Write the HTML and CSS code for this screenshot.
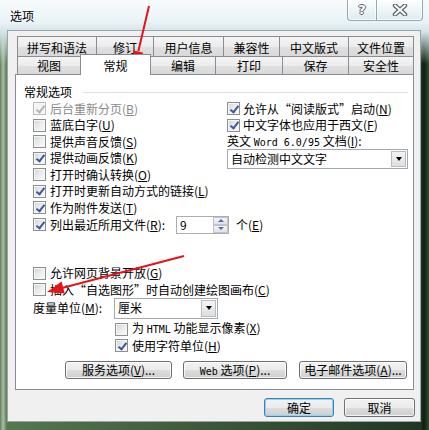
FILE: index.html
```html
<!DOCTYPE html>
<html lang="zh-CN">
<head>
  <meta charset="UTF-8" />
  <title>选项</title>
  <link rel="stylesheet" href="styles.css">
</head>
<body>
  <div class="window">
    <div class="titlebar">
      <span class="title">选项</span>
      <div class="caption">
        <div class="cap-btn cap-help">?</div>
        <div class="cap-btn cap-close">
          <svg width="16" height="12" viewBox="0 0 16 12">
            <path d="M3 1.5 L13 10.5 M13 1.5 L3 10.5" stroke="#59626b" stroke-width="4.4" stroke-linecap="round" fill="none"/>
            <path d="M3 1.5 L13 10.5 M13 1.5 L3 10.5" stroke="#fff" stroke-width="2" stroke-linecap="round" fill="none"/>
          </svg>
        </div>
      </div>
    </div>

    <div class="client">
      <!-- two rows of tabs, front row holds the selected one -->
      <div class="tabs">
        <div class="tab-row back">
          <div class="tab tab-spell">拼写和语法</div>
          <div class="tab tab-track">修订</div>
          <div class="tab tab-user">用户信息</div>
          <div class="tab tab-compat">兼容性</div>
          <div class="tab tab-layout">中文版式</div>
          <div class="tab tab-files">文件位置</div>
        </div>
        <div class="tab-row front">
          <div class="tab tab-view">视图</div>
          <div class="tab tab-general active">常规</div>
          <div class="tab tab-edit">编辑</div>
          <div class="tab tab-print">打印</div>
          <div class="tab tab-save">保存</div>
          <div class="tab tab-security">安全性</div>
        </div>
      </div>

      <div class="panel">
        <div class="group-head">
          <span>常规选项</span>
          <div class="rule"></div>
        </div>

        <div class="cols">
          <div class="col">
            <div class="check disabled"><span class="box on"></span><span>后台重新分页(<u>B</u>)</span></div>
            <div class="check"><span class="box"></span><span>蓝底白字(<u>U</u>)</span></div>
            <div class="check"><span class="box"></span><span>提供声音反馈(<u>S</u>)</span></div>
            <div class="check"><span class="box on"></span><span>提供动画反馈(<u>K</u>)</span></div>
            <div class="check"><span class="box"></span><span>打开时确认转换(<u>O</u>)</span></div>
            <div class="check"><span class="box on"></span><span>打开时更新自动方式的链接(<u>L</u>)</span></div>
            <div class="check"><span class="box on"></span><span>作为附件发送(<u>T</u>)</span></div>
            <div class="check spin-row">
              <span class="box on"></span>
              <span class="spin-label">列出最近所用文件(<u>R</u>):</span>
              <div class="spin">
                <span class="spin-val">9</span>
                <div class="spin-btns">
                  <span class="up"></span>
                  <span class="down"></span>
                </div>
              </div>
              <span class="unit">个(<u>E</u>)</span>
            </div>
          </div>

          <div class="col right">
            <div class="check"><span class="box on"></span><span>允许从“阅读版式”启动(<u>N</u>)</span></div>
            <div class="check"><span class="box on"></span><span>中文字体也应用于西文(<u>F</u>)</span></div>
            <div class="label-row">英文 <span class="mono">Word 6.0/95</span> 文档(<u>I</u>):</div>
            <div class="combo combo-wide">
              <span class="combo-text">自动检测中文文字</span>
              <span class="combo-btn"></span>
            </div>
          </div>
        </div>

        <div class="lower">
          <div class="check"><span class="box"></span><span>允许网页背景开放(<u>G</u>)</span></div>
          <div class="check"><span class="box"></span><span>插入“自选图形”时自动创建绘图画布(<u>C</u>)</span></div>
          <div class="measure">
            <span class="measure-label">度量单位(<u>M</u>):</span>
            <div class="combo combo-unit">
              <span class="combo-text">厘米</span>
              <span class="combo-btn"></span>
            </div>
          </div>
          <div class="check sub first"><span class="box"></span><span>为 <span class="mono">HTML</span> 功能显示像素(<u>X</u>)</span></div>
          <div class="check sub"><span class="box on"></span><span>使用字符单位(<u>H</u>)</span></div>
        </div>

        <div class="btn-row">
          <button class="btn btn-service">服务选项(<u>V</u>)...</button>
          <button class="btn btn-web"><span class="mono">Web</span> 选项(<u>P</u>)...</button>
          <button class="btn btn-mail">电子邮件选项(<u>A</u>)...</button>
        </div>
      </div>

      <div class="footer">
        <button class="btn btn-ok">确定</button>
        <button class="btn btn-cancel">取消</button>
      </div>
    </div>

    <!-- red annotation arrows drawn over the dialog -->
    <svg class="marks" width="429" height="430" viewBox="0 0 429 430">
      <line x1="149" y1="6" x2="138.4" y2="51" stroke="#e3151b" stroke-width="2"/>
      <polygon points="135,64 132.8,50.3 143.4,52.8" fill="#e3151b"/>
      <line x1="184" y1="256" x2="62" y2="288" stroke="#e3151b" stroke-width="2"/>
      <polygon points="47,292 61.6,281.4 64.8,293.6" fill="#e3151b"/>
    </svg>
  </div>
</body>
</html>
```

FILE: styles.css
```css
* {
  box-sizing: border-box;
}

body {
  margin: 0;
  background: #253d25;
  font-family: "Noto Sans CJK SC", "Noto Sans", sans-serif;
  font-size: 12px;
  line-height: 16px;
  color: #000;
}

u {
  text-decoration: underline;
  text-underline-offset: 1px;
}

.mono {
  font-family: "DejaVu Sans Mono", "Liberation Mono", monospace;
  font-size: 10px;
}

/* Aero glass frame */
.window {
  position: relative;
  width: 429px;
  height: 430px;
  display: flex;
  flex-direction: column;
  padding: 0 8px 8px 7px;
  overflow: hidden;
  background:
    linear-gradient(to bottom, #f7fbfc 0, #e9f3f6 22px, #d3e3e7 32px, rgba(190, 210, 200, 0) 64px),
    linear-gradient(to right, #5f7f5c 0, #a9c0a6 3px, #56774f 7px, #203622 421px, #0e1c0f 424px, #2f5230 429px);
}

.titlebar {
  height: 30px;
  display: flex;
  justify-content: space-between;
  align-items: flex-start;
}

.title {
  margin: 8px 0 0 3px;
  font-size: 12px;
  text-shadow: 0 0 6px #fff, 0 0 3px #fff;
}

.caption {
  display: flex;
  margin-right: -2px;
}

.cap-btn {
  height: 21px;
  display: flex;
  justify-content: center;
  align-items: center;
  border: 1px solid rgba(80, 100, 115, 0.55);
  border-top: none;
  background: linear-gradient(to bottom, rgba(255, 255, 255, 0.75), rgba(215, 232, 238, 0.7));
  box-shadow: inset 0 0 0 1px rgba(255, 255, 255, 0.7);
}

.cap-help {
  width: 29px;
  border-right: none;
  border-radius: 0 0 0 4px;
  font-family: "DejaVu Sans", sans-serif;
  font-weight: bold;
  font-size: 13px;
  color: #fff;
  text-shadow: 1px 0 0 #5b636b, -1px 0 0 #5b636b, 0 1px 0 #5b636b, 0 -1px 0 #5b636b;
}

.cap-close {
  width: 47px;
  border-radius: 0 0 4px 0;
}

.client {
  flex: 1;
  display: flex;
  flex-direction: column;
  padding: 5px 6px 0 7px;
  background: #f0f0f0;
  border: 1px solid #9aa5ae;
}

/* Tabs */
.tabs {
  height: 38px;
  margin-left: 2px;
}

.tab-row {
  display: flex;
  align-items: flex-start;
}

.tab-row.back {
  height: 20px;
}

.tab-row.front {
  height: 18px;
}

.tab {
  flex: none;
  margin-left: -1px;
  border: 1px solid #898c95;
  border-bottom: none;
  background: linear-gradient(to bottom, #f4f4f4 0, #ececec 50%, #e0e0e0 51%, #d9d9d9 100%);
  text-align: center;
  white-space: nowrap;
}

.tab-row .tab:first-child {
  margin-left: 0;
}

.back .tab {
  height: 20px;
  padding-top: 3px;
}

.front .tab {
  height: 18px;
  padding-top: 1px;
}

.front .tab.active {
  height: 21px;
  margin-top: -2px;
  padding-top: 3px;
  background: #fff;
  z-index: 2;
}

.tab-spell { width: 80px; }
.tab-track { width: 58px; }
.tab-user { width: 71px; }
.tab-compat { width: 57px; }
.tab-layout { width: 70px; }
.tab-files { width: 66px; }

.tab-view { width: 64px; }
.tab-general { width: 71px; }
.tab-edit { width: 66px; }
.tab-print { width: 68px; }
.tab-save { width: 67px; }
.tab-security { width: 66px; }

/* Page panel */
.panel {
  height: 316px;
  display: flex;
  flex-direction: column;
  padding-top: 9px;
  background: #fff;
  border: 1px solid #898c95;
}

.group-head {
  display: flex;
  align-items: center;
  height: 16px;
  margin-left: 8px;
}

.group-head .rule {
  flex: 1;
  height: 1px;
  margin: 0 5px 0 11px;
  background: #d5dfe5;
}

.cols {
  display: grid;
  grid-template-columns: 194px 181px;
  padding-left: 17px;
  margin-top: 0.4px;
}

.check {
  display: flex;
  align-items: center;
  height: 16.5px;
  white-space: nowrap;
}

.check > * {
  flex: none;
}

.box {
  position: relative;
  width: 13px;
  height: 13px;
  margin-right: 4px;
  border: 1px solid #8e8f8f;
  background: linear-gradient(135deg, #cdd1d6 0, #e9eaec 45%, #fbfbfb 100%);
  box-shadow: inset 0 0 0 1px #f6f6f6;
}

.box.on::after {
  content: "";
  position: absolute;
  left: 3.5px;
  top: 0.5px;
  width: 3px;
  height: 7px;
  border: solid #3b589a;
  border-width: 0 2px 2px 0;
  transform: rotate(38deg);
}

.right .box {
  margin-right: 3px;
}

.check.disabled {
  color: #8a8a8a;
}

.check.disabled .box {
  border-color: #bcbcbc;
  background: #f4f4f4;
}

.check.disabled .box.on::after {
  border-color: #b4b4b4;
}

.spin-row {
  height: 18px;
}

.spin-label {
  width: 126px;
}

.spin {
  display: flex;
  width: 53px;
  height: 18px;
  border: 1px solid #abadb3;
  background: #fff;
}

.spin-val {
  flex: 1;
  padding-left: 3px;
}

.spin-btns {
  width: 15px;
  display: flex;
  flex-direction: column;
}

.spin-btns span {
  flex: 1;
  display: flex;
  justify-content: center;
  align-items: center;
  border: 1px solid #c0c4c8;
  background: linear-gradient(to bottom, #f5f5f5, #e2e2e2);
}

.spin-btns .up::after {
  content: "";
  border-left: 3px solid transparent;
  border-right: 3px solid transparent;
  border-bottom: 3px solid #4d6bb3;
}

.spin-btns .down::after {
  content: "";
  border-left: 3px solid transparent;
  border-right: 3px solid transparent;
  border-top: 3px solid #4d6bb3;
}

.unit {
  margin-left: 7px;
}

.label-row {
  height: 15.5px;
  white-space: nowrap;
}

/* Combo boxes */
.combo {
  display: flex;
  background: #fff;
  border: 1px solid #a4a9b0;
}

.combo-wide {
  width: 181px;
  height: 20px;
}

.combo-unit {
  width: 104px;
  height: 21px;
}

.combo-text {
  flex: 1;
  padding-left: 3px;
  line-height: 18px;
}

.combo-btn {
  width: 15px;
  margin: 1px;
  display: flex;
  justify-content: center;
  align-items: center;
  border: 1px solid #b7bcc1;
  background: linear-gradient(to bottom, #f4f4f4, #dedede);
}

.combo-btn::after {
  content: "";
  border-left: 3.5px solid transparent;
  border-right: 3.5px solid transparent;
  border-top: 4px solid #000;
}

.lower {
  display: flex;
  flex-direction: column;
  padding-left: 17px;
  margin-top: 31px;
}

.measure {
  display: flex;
  align-items: center;
  height: 21px;
}

.measure-label {
  width: 81px;
}

.check.sub {
  margin-left: 82px;
}

.check.sub.first {
  margin-top: 2px;
}

/* Buttons */
.btn-row {
  display: flex;
  margin: 7px 0 0 49px;
}

.btn {
  height: 18px;
  padding: 0;
  font: inherit;
  line-height: 15px;
  color: #000;
  white-space: nowrap;
  overflow: hidden;
  border: 1px solid #707070;
  border-radius: 3px;
  background: linear-gradient(to bottom, #f2f2f2 0, #ebebeb 50%, #dddddd 51%, #cfcfcf 100%);
  box-shadow: inset 0 0 0 1px rgba(255, 255, 255, 0.75);
}

.btn-service { width: 107px; }
.btn-web { width: 104px; margin-left: 11px; }
.btn-mail { width: 108px; margin-left: 12px; }

.footer {
  display: flex;
  justify-content: flex-end;
  margin: 8px -1px 0 0;
}

.btn-ok {
  width: 70px;
  height: 19px;
  border-color: #3c7fb1;
  box-shadow: inset 0 0 0 1px #8fd4f4;
}

.btn-cancel {
  width: 71px;
  height: 19px;
  margin-left: 10px;
}

.marks {
  position: absolute;
  left: 0;
  top: 0;
  pointer-events: none;
}
```
